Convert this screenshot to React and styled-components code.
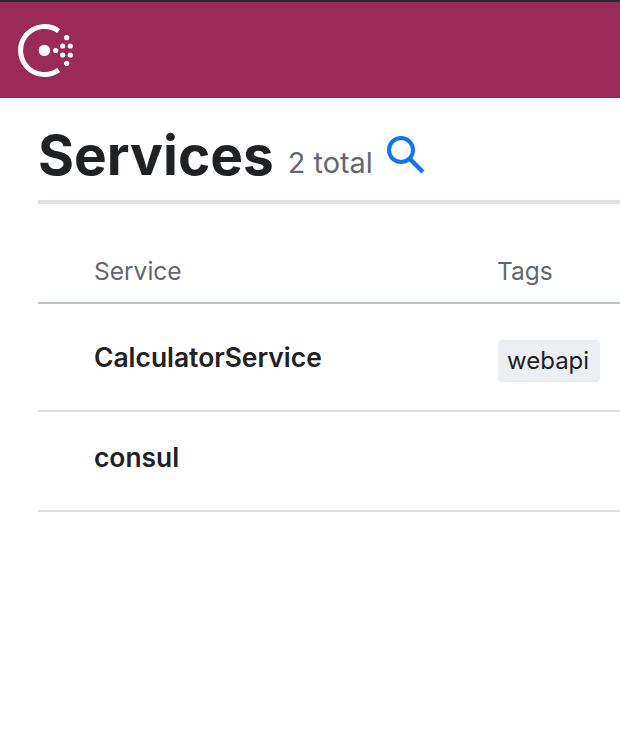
import React from 'react';
import styled, { createGlobalStyle } from 'styled-components';

const GlobalStyle = createGlobalStyle`
  html, body {
    margin: 0;
    padding: 0;
    background: #fff;
    overflow: hidden;
  }
  body {
    font-family: Inter, "Liberation Sans", sans-serif;
    color: #1f2124;
  }
`;

const TopBar = styled.header`
  box-sizing: border-box;
  height: 98px;
  background: #9b2a59;
  border-top: 2px solid #2b2a30;
  display: flex;
  align-items: center;
  padding: 0 0 0 18px;
`;

const Main = styled.main`
  padding-left: 38px;
`;

const Heading = styled.div`
  box-sizing: border-box;
  height: 106px;
  display: flex;
  align-items: flex-start;
  border-bottom: 4px solid #e0e0e8;
`;

const Title = styled.h1`
  margin: 24px 0 0;
  font-size: 55px;
  line-height: 66px;
  font-weight: 700;
  letter-spacing: 0;
  color: #1f2124;
`;

const Total = styled.span`
  margin: 45px 0 0 14px;
  font-size: 28.8px;
  line-height: 40px;
  color: #5f6873;
`;

const SearchIcon = styled.svg`
  margin: 38px 0 0 14px;
  display: block;
`;

const Row = styled.div`
  display: grid;
  grid-template-columns: 460px 1fr;
  align-items: center;
  box-sizing: border-box;
  height: ${(p) => p.$height}px;
  border-bottom: 2px solid ${(p) => (p.$head ? '#bac1cc' : '#dcdde5')};
  padding-top: ${(p) => p.$top || 0}px;
  padding-bottom: ${(p) => p.$bottom || 0}px;
`;

const HeadCell = styled.div`
  font-size: 24.5px;
  color: #5f6873;
  margin-left: ${(p) => p.$indent || 0}px;
`;

const NameCell = styled.div`
  font-size: 26.4px;
  font-weight: 560;
  color: #1f2124;
  padding-left: 56px;
`;

const TagCell = styled.div`
  display: flex;
  padding-top: 8px;
`;

const Tag = styled.span`
  background: #ebeef2;
  border-radius: 4px;
  padding: 0 11px 0 9px;
  height: 42px;
  line-height: 42px;
  font-size: 24px;
  color: #1f2124;
`;

const Logo = () => (
  <svg width="58" height="58" viewBox="18 21 58 58">
    <path
      d="M58.7 31.1 A24 24 0 1 0 58.7 69.9"
      fill="none"
      stroke="#fff"
      strokeWidth="5"
    />
    <circle cx="44.4" cy="50.4" r="5.7" fill="#fff" />
    <circle cx="55.7" cy="50.5" r="2.6" fill="#fff" />
    <circle cx="66.7" cy="37.7" r="2.6" fill="#fff" />
    <circle cx="62.7" cy="46" r="2.6" fill="#fff" />
    <circle cx="70.3" cy="46" r="2.6" fill="#fff" />
    <circle cx="62.7" cy="55" r="2.6" fill="#fff" />
    <circle cx="70.3" cy="55" r="2.6" fill="#fff" />
    <circle cx="66.7" cy="63.3" r="2.6" fill="#fff" />
  </svg>
);

export default function App() {
  return (
    <>
      <GlobalStyle />
      <TopBar>
        <Logo />
      </TopBar>
      <Main>
        <Heading>
          <Title>Services</Title>
          <Total>2 total</Total>
          <SearchIcon width="40" height="40" viewBox="0 0 40 40">
            <circle cx="14" cy="14" r="12" fill="none" stroke="#0f75f5" strokeWidth="4" />
            <path d="M23 23 L36 36" fill="none" stroke="#0f75f5" strokeWidth="4.5" />
          </SearchIcon>
        </Heading>
        <Row $head $height={100} $top={36}>
          <HeadCell $indent={56}>Service</HeadCell>
          <HeadCell $indent={-1}>Tags</HeadCell>
        </Row>
        <Row $height={108}>
          <NameCell>CalculatorService</NameCell>
          <TagCell>
            <Tag>webapi</Tag>
          </TagCell>
        </Row>
        <Row $height={100} $bottom={8}>
          <NameCell>consul</NameCell>
          <TagCell />
        </Row>
      </Main>
    </>
  );
}
